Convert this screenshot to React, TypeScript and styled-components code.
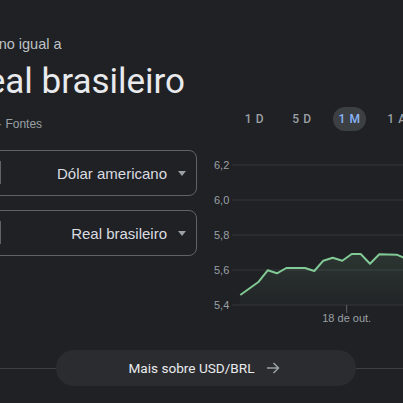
import React from "react";
import styled, { createGlobalStyle } from "styled-components";

const Global = createGlobalStyle`
  html, body { margin: 0; padding: 0; background: #202124; }
  body { font-family: "Liberation Sans", Arial, sans-serif; }
`;

const Viewport = styled.div`
  width: 403px;
  height: 403px;
  overflow: hidden;
  background: #202124;
  display: flex;
  flex-direction: column;
`;

const Sheet = styled.div`
  margin-left: -120px;
  width: 640px;
  padding-top: 34px;
  display: flex;
  flex-direction: column;
`;

const Header = styled.div`
  padding-left: 16.3px;
  display: flex;
  flex-direction: column;
`;

const Intro = styled.div`
  font: 14.5px/20px "Liberation Sans", Arial, sans-serif;
  color: #bdc1c6;
  white-space: nowrap;
`;

const Heading = styled.div`
  margin-top: 6px;
  margin-left: -5.7px;
  font: 400 35px/44px Roboto, "Liberation Sans", sans-serif;
  color: #e8eaed;
  white-space: nowrap;
`;

const Body = styled.div`
  margin-top: 3px;
  display: flex;
  height: 223px;
`;

const LeftCol = styled.div`
  width: 317px;
  flex-shrink: 0;
  display: flex;
  flex-direction: column;
`;

const Meta = styled.div`
  margin-top: 9px;
  font: 12px/16px "Liberation Sans", Arial, sans-serif;
  color: #9aa0a6;
  white-space: nowrap;
`;

const Converter = styled.div<{ $first?: boolean }>`
  margin-top: ${(p) => (p.$first ? "18px" : "14px")};
  height: 46px;
  box-sizing: border-box;
  border: 1px solid #5f6368;
  border-radius: 8px;
  display: flex;
  align-items: center;
`;

const Amount = styled.div`
  width: 119px;
  flex-shrink: 0;
  padding-left: 14px;
  box-sizing: border-box;
  font: 16px "Liberation Sans", Arial, sans-serif;
  color: #e8eaed;
`;

const Divider = styled.div`
  width: 1px;
  height: 23px;
  margin-top: -2px;
  background: #5f6368;
`;

const Select = styled.div`
  flex: 1;
  display: flex;
  align-items: center;
  justify-content: flex-end;
  gap: 11px;
  padding-right: 10px;
  font: 15px "Liberation Sans", Arial, sans-serif;
  color: #dadce0;
  white-space: nowrap;
`;

const Caret = styled.span`
  width: 0;
  height: 0;
  border-left: 4.5px solid transparent;
  border-right: 4.5px solid transparent;
  border-top: 5px solid #9aa0a6;
  margin-top: 1px;
`;

const RightCol = styled.div`
  margin-left: 17px;
  flex: 1;
  display: flex;
  flex-direction: column;
`;

const Tabs = styled.div`
  padding-left: 24px;
  display: flex;
  gap: 14.5px;
`;

const Tab = styled.div<{ $active?: boolean }>`
  width: 33px;
  height: 24px;
  flex-shrink: 0;
  border-radius: 12px;
  display: flex;
  align-items: center;
  justify-content: center;
  font: 500 12px Roboto, "Liberation Sans", sans-serif;
  letter-spacing: 0.6px;
  white-space: nowrap;
  color: ${(p) => (p.$active ? "#8ab4f8" : "#9aa0a6")};
  background: ${(p) => (p.$active ? "#3c4043" : "transparent")};
`;

const Chart = styled.svg`
  margin-top: 24px;
  display: block;
  overflow: visible;
`;

const Footer = styled.div`
  margin-top: 20px;
  height: 36px;
  display: flex;
  align-items: center;
`;

const Rule = styled.div<{ $w?: number }>`
  height: 1px;
  background: #3c4043;
  ${(p) => (p.$w ? `width: ${p.$w}px; flex-shrink: 0;` : "flex: 1;")}
`;

const MoreButton = styled.div`
  width: 300px;
  height: 36px;
  flex-shrink: 0;
  border-radius: 18px;
  background: #2b2c2f;
  display: flex;
  align-items: center;
  justify-content: center;
  gap: 11px;
  padding-right: 4px;
  box-sizing: border-box;
  font: 400 13.6px Roboto, "Liberation Sans", sans-serif;
  color: #e8eaed;
`;

const grid = [
  { y: 10, label: "6,2" },
  { y: 45, label: "6,0" },
  { y: 80, label: "5,8" },
  { y: 115, label: "5,6" },
  { y: 150, label: "5,4" },
];

const pts: [number, number][] = [
  [26.3, 140],
  [44.7, 126.7],
  [53.7, 115.3],
  [63, 118.3],
  [72.3, 113],
  [91, 113],
  [100.3, 116],
  [109.3, 105.7],
  [118.7, 102.7],
  [128.3, 105.7],
  [137.7, 99],
  [146.7, 99],
  [156, 108.7],
  [165.3, 99.3],
  [182.7, 99.7],
  [189, 102.3],
  [198, 104],
  [210, 100],
];

const line = pts.map(([x, y]) => `${x},${y}`).join(" ");
const area = `${pts[0][0]},150 ${line} ${pts[pts.length - 1][0]},150`;

export default function App() {
  return (
    <Viewport>
      <Global />
      <Sheet>
        <Header>
          <Intro>1 Dólar americano igual a</Intro>
          <Heading>5,67 Real brasileiro</Heading>
        </Header>
        <Body>
          <LeftCol>
            <Meta>18 de out. 14:05 UTC · Fontes</Meta>
            <Converter $first>
              <Amount>1</Amount>
              <Divider />
              <Select>
                Dólar americano
                <Caret />
              </Select>
            </Converter>
            <Converter>
              <Amount>5,67</Amount>
              <Divider />
              <Select>
                Real brasileiro
                <Caret />
              </Select>
            </Converter>
          </LeftCol>
          <RightCol>
            <Tabs>
              <Tab>1 D</Tab>
              <Tab>5 D</Tab>
              <Tab $active>1 M</Tab>
              <Tab>1 A</Tab>
              <Tab>5 A</Tab>
            </Tabs>
            <Chart width="220" height="175" viewBox="0 0 220 175">
              <defs>
                <linearGradient id="fill" x1="0" y1="0" x2="0" y2="1">
                  <stop offset="0" stopColor="#81c995" stopOpacity="0.12" />
                  <stop offset="1" stopColor="#81c995" stopOpacity="0.02" />
                </linearGradient>
              </defs>
              {grid.map((g) => (
                <g key={g.label}>
                  <line x1="18" x2="240" y1={g.y} y2={g.y} stroke="#35363a" strokeWidth="1" />
                  <text
                    x="0"
                    y={g.y + 4}
                    fill="#9aa0a6"
                    fontSize="11"
                    fontFamily="Liberation Sans, Arial, sans-serif"
                  >
                    {g.label}
                  </text>
                </g>
              ))}
              <polygon points={area} fill="url(#fill)" />
              <polyline points={line} fill="none" stroke="#81c995" strokeWidth="2" strokeLinejoin="round" />
              <line x1="132.7" x2="132.7" y1="150" y2="158" stroke="#5f6368" strokeWidth="1" />
              <text
                x="132.7"
                y="166.7"
                textAnchor="middle"
                fill="#9aa0a6"
                fontSize="11"
                fontFamily="Liberation Sans, Arial, sans-serif"
              >
                18 de out.
              </text>
            </Chart>
          </RightCol>
        </Body>
      </Sheet>
      <Footer>
        <Rule $w={56} />
        <MoreButton>
          Mais sobre USD/BRL
          <svg width="14" height="12" viewBox="0 0 14 12" fill="none">
            <path d="M1 6h11.5M7.5 1l5 5-5 5" stroke="#9aa0a6" strokeWidth="1.5" />
          </svg>
        </MoreButton>
        <Rule />
      </Footer>
    </Viewport>
  );
}
